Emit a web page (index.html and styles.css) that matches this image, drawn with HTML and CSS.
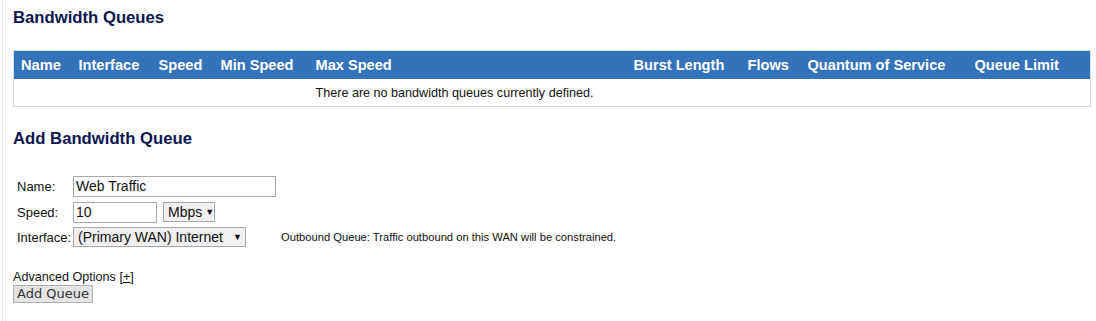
FILE: index.html
```html
<!DOCTYPE html>
<html>
<head>
<meta charset="utf-8">
<link rel="stylesheet" href="styles.css">
</head>
<body>
<div class="page">
  <h2 class="title">Bandwidth Queues</h2>
  <table class="queues">
    <colgroup>
      <col class="c1"><col class="c2"><col class="c3"><col class="c4"><col class="c5"><col class="c6"><col class="c7"><col class="c8"><col class="c9">
    </colgroup>
    <thead>
      <tr>
        <th>Name</th><th>Interface</th><th>Speed</th><th>Min Speed</th><th>Max Speed</th><th>Burst Length</th><th>Flows</th><th>Quantum of Service</th><th>Queue Limit</th>
      </tr>
    </thead>
    <tbody>
      <tr>
        <td></td><td></td><td></td><td></td><td colspan="5">There are no bandwidth queues currently defined.</td>
      </tr>
    </tbody>
  </table>

  <h2 class="title title2">Add Bandwidth Queue</h2>
  <table class="form">
    <tr>
      <td class="lbl">Name:</td>
      <td colspan="2"><input class="txt name" type="text" value="Web Traffic"></td>
    </tr>
    <tr>
      <td class="lbl">Speed:</td>
      <td colspan="2"><input class="txt speed" type="text" value="10"><span class="sel unit">Mbps<span class="arr">&#9660;</span></span></td>
    </tr>
    <tr class="last">
      <td class="lbl">Interface:</td>
      <td class="ifc"><span class="sel iface">(Primary WAN) Internet<span class="arr">&#9660;</span></span></td>
      <td class="help">Outbound Queue: Traffic outbound on this WAN will be constrained.</td>
    </tr>
  </table>
  <div class="adv">Advanced Options [<u>+</u>]</div>
  <button class="btn">Add Queue</button>
</div>
</body>
</html>
```
FILE: styles.css
```css
html, body {
  margin: 0;
  padding: 0;
  background: #fff;
}
body {
  font-family: "Liberation Sans", Arial, sans-serif;
  font-size: 13px;
  color: #111;
}
.page {
  margin-left: 2px;
  border-left: 1px solid #e6e6e6;
  padding: 9px 0 0 10px;
  min-height: 321px;
  box-sizing: border-box;
  width: 1088px;
}
.title {
  margin: 0;
  font-size: 16.7px;
  line-height: 18px;
  font-weight: bold;
  color: #0c1552;
}
.queues {
  margin-top: 23px;
  border-collapse: collapse;
  width: 1077px;
  table-layout: fixed;
  border: 1px solid #dcdcdc;
}
.c1 { width: 58px; }
.c2 { width: 80px; }
.c3 { width: 62px; }
.c4 { width: 95px; }
.c5 { width: 318px; }
.c6 { width: 114px; }
.c7 { width: 60px; }
.c8 { width: 167px; }
.c9 { width: 123px; }
.queues th {
  background: #3373b9;
  color: #fff;
  font-size: 14.6px;
  font-weight: bold;
  text-align: left;
  padding: 0 0 0 7px;
  height: 28px;
  white-space: nowrap;
}
.queues td {
  height: 27px;
  padding: 0 0 0 7px;
  font-size: 12.6px;
  color: #111;
  white-space: nowrap;
}
.title2 {
  margin-top: 23px;
}
.form {
  margin-top: 25px;
  border-collapse: collapse;
}
.form td {
  padding: 0;
  height: 26px;
  vertical-align: middle;
}
.form .last td {
  height: 24px;
}
.form .lbl {
  padding-left: 4px;
  width: 56px;
  color: #111;
}
.txt {
  font-family: "Liberation Sans", Arial, sans-serif;
  font-size: 14px;
  color: #111;
  border: 1px solid #a9a9a9;
  height: 21px;
  box-sizing: border-box;
  padding: 0 2px;
  margin: 0;
  vertical-align: middle;
}
.name { width: 203px; }
.speed { width: 84px; }
.sel {
  display: inline-flex;
  align-items: center;
  box-sizing: border-box;
  height: 20px;
  border: 1px solid #a9a9a9;
  background: #f0f0f0;
  font-size: 14px;
  padding: 0 3px 0 4px;
  vertical-align: middle;
  color: #111;
}
.unit {
  margin-left: 6px;
  width: 52px;
}
.iface {
  width: 173px;
}
.arr {
  font-size: 9px;
  margin-left: auto;
  padding-left: 3px;
}
.ifc { width: 208px; }
.help {
  font-size: 11.2px;
  color: #111;
}
.adv {
  margin-top: 21px;
  font-size: 12.6px;
  line-height: 15px;
}
.btn {
  font-family: "DejaVu Sans", sans-serif;
  font-size: 13px;
  color: #333;
  background: #e4e4e4;
  border: 1px solid #b0b0b0;
  padding: 0 3px;
  height: 18px;
  line-height: 16px;
  margin: 0;
  display: block;
  white-space: nowrap;
}
```
